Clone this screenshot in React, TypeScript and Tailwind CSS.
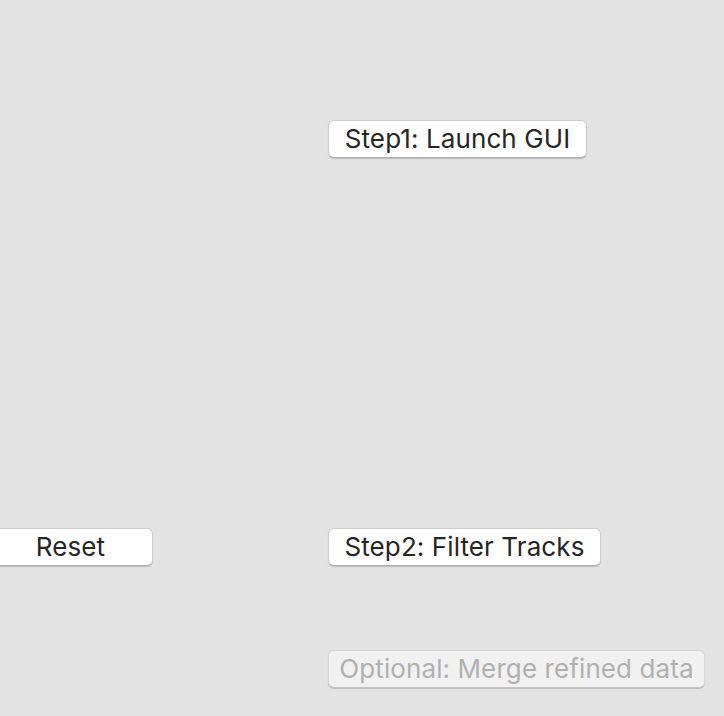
import React from "react";

const btn =
  "h-[38px] flex items-center justify-center rounded-[6px] border border-[#cdcdcd] border-b-[#b0b0b0] shadow-[0_1px_1px_rgba(0,0,0,0.18)] text-[26px] leading-none font-['Inter','Noto_Sans',sans-serif] tracking-[0.1px]";

export default function App() {
  return (
    <div className="w-[724px] h-[716px] overflow-hidden bg-[#e3e3e3] pt-[120px]">
      {/* Step 1 */}
      <div className="pl-[328px]">
        <button className={`${btn} w-[259px] bg-white text-[#262626]`}>
          Step1: Launch GUI
        </button>
      </div>

      {/* Reset + Step 2 */}
      <div className="mt-[370px] flex items-center">
        <button className={`${btn} ml-[-12px] w-[165px] bg-white text-[#262626]`}>
          Reset
        </button>
        <button className={`${btn} ml-[175px] w-[273px] bg-white text-[#262626]`}>
          Step2: Filter Tracks
        </button>
      </div>

      {/* Optional */}
      <div className="mt-[84px] pl-[328px]">
        <button
          disabled
          className={`${btn} w-[377px] bg-[#f1f1f1] text-[#b0b0b0] border-[#d6d6d6] border-b-[#c2c2c2]`}
        >
          Optional: Merge refined data
        </button>
      </div>
    </div>
  );
}
